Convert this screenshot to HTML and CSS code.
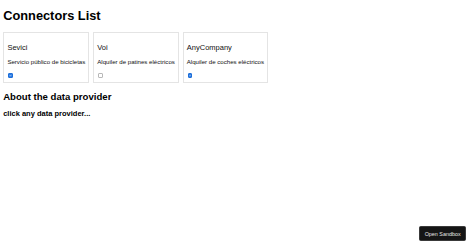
FILE: index.html
```html
<!DOCTYPE html>
<html>
<head>
<meta charset="utf-8">
<link rel="stylesheet" href="styles.css">
</head>
<body>
<div class="title">Connectors List</div>
<div class="cards">
  <div class="card">
    <div class="card-name">Sevici</div>
    <p class="card-desc">Servicio público de bicicletas</p>
    <input class="card-check" type="checkbox" checked>
  </div>
  <div class="card">
    <div class="card-name">Voi</div>
    <p class="card-desc">Alquiler de patines eléctricos</p>
    <input class="card-check" type="checkbox">
  </div>
  <div class="card">
    <div class="card-name">AnyCompany</div>
    <p class="card-desc">Alquiler de coches eléctricos</p>
    <input class="card-check" type="checkbox" checked>
  </div>
</div>
<div class="section">About the data provider</div>
<div class="hint">click any data provider...</div>
<a class="sandbox-btn">Open Sandbox</a>
</body>
</html>
```
FILE: styles.css
```css
html {
  background: #ffffff;
}
body {
  margin: 0;
  padding: 8.6px 3.2px 0;
  font-family: "Liberation Sans", Arial, Helvetica, sans-serif;
  color: #000;
}
.title {
  font-size: 12.8px;
  line-height: 14.7px;
  font-weight: bold;
  margin: 0 0 8.6px;
}
.cards {
  display: flex;
  gap: 3.6px;
  align-items: flex-start;
}
.card {
  border: 0.6px solid #e4e4e4;
  padding: 3.6px 3.2px 4.7px;
  display: flex;
  flex-direction: column;
  align-items: flex-start;
}
.card-name {
  font-size: 7.5px;
  line-height: 8.6px;
  font-weight: normal;
  margin: 7.4px 0 5.4px;
  color: #111;
}
.card-desc {
  font-size: 6.1px;
  line-height: 7px;
  margin: 0 0 8.5px;
  color: #111;
}
.card-check {
  -webkit-appearance: none;
  appearance: none;
  width: 4.4px;
  height: 4.4px;
  margin: 0 0 0 1px;
  border: 0.6px solid #b8b8b8;
  border-radius: 1px;
  background: #fff;
  box-sizing: border-box;
}
.card-check:checked {
  border-color: #1f6fd8;
  background: #2a7be4 url("data:image/svg+xml,%3Csvg xmlns='http://www.w3.org/2000/svg' viewBox='0 0 10 10'%3E%3Cpath d='M2.2 5.2 L4.2 7.2 L7.9 2.9' fill='none' stroke='white' stroke-width='1.8'/%3E%3C/svg%3E") center / 100% 100% no-repeat;
}
.section {
  font-size: 9.6px;
  line-height: 11px;
  font-weight: bold;
  margin: 8px 0 8px;
}
.hint {
  font-size: 7.5px;
  line-height: 8.6px;
  font-weight: bold;
  margin: 0;
}
.sandbox-btn {
  position: fixed;
  right: 8px;
  bottom: 7px;
  background: #151515;
  color: #e8e8e8;
  border: 0.6px solid #3a3a3a;
  border-radius: 1.6px;
  font-size: 5.4px;
  padding: 3.2px 4.4px;
  line-height: 6.2px;
}
```
